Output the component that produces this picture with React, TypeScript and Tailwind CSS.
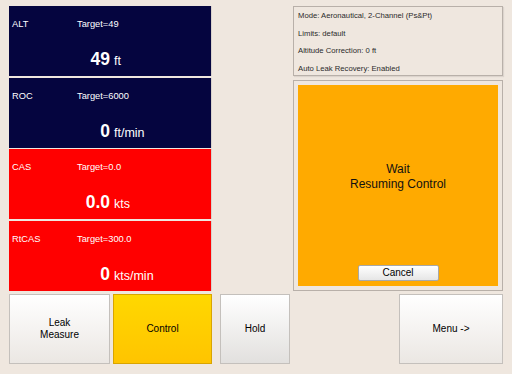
import React from "react";

const font = { fontFamily: '"Liberation Sans", Arial, sans-serif' };

type Reading = {
  label: string;
  target: string;
  value: string;
  unit: string;
  bg: string;
};

const readings: Reading[] = [
  { label: "ALT", target: "Target=49", value: "49", unit: "ft", bg: "bg-[#05053f]" },
  { label: "ROC", target: "Target=6000", value: "0", unit: "ft/min", bg: "bg-[#05053f]" },
  { label: "CAS", target: "Target=0.0", value: "0.0", unit: "kts", bg: "bg-[#ff0000]" },
  { label: "RtCAS", target: "Target=300.0", value: "0", unit: "kts/min", bg: "bg-[#ff0000]" },
];

const ReadingPanel = ({ r }: { r: Reading }) => (
  <div className={`${r.bg} h-[70px] text-white border-r border-[#d8d2cc] flex flex-col`}>
    <div className="flex h-[37px] items-center text-[9.3px] leading-none">
      <span className="pl-[3px] w-[68px]">{r.label}</span>
      <span>{r.target}</span>
    </div>
    <div className="flex items-baseline mt-[8px]">
      <span className="w-[101px] text-right text-[17.5px] font-bold leading-none">{r.value}</span>
      <span className="ml-[4px] text-[12.5px] leading-none">{r.unit}</span>
    </div>
  </div>
);

const App = () => {
  return (
    <div style={font} className="w-[512px] h-[374px] bg-[#efe7df] flex flex-col overflow-hidden">
      <div className="flex pt-[6px]">
        <div className="ml-[9px] w-[203px] flex flex-col gap-[1.7px]">
          {readings.map((r) => (
            <ReadingPanel key={r.label} r={r} />
          ))}
        </div>
        <div className="ml-[81px] w-[210px] flex flex-col">
          <div className="h-[70px] border border-[#b8b0a9] shadow-[1px_1px_1px_rgba(0,0,0,0.08)] pl-[4px] text-[7.7px] leading-[17.5px] text-[#2a2a2a]">
            <div>Mode: Aeronautical, 2-Channel (Ps&amp;Pt)</div>
            <div>Limits: default</div>
            <div>Altitude Correction: 0 ft</div>
            <div>Auto Leak Recovery: Enabled</div>
          </div>
          <div className="mt-[4px] h-[211px] border border-[#b8b0a9] p-[4px]">
            <div className="h-full bg-[#ffaa00] flex flex-col items-center">
              <div className="mt-[77px] text-center text-[12px] leading-[15px] text-[#111]">
                <div>Wait</div>
                <div>Resuming Control</div>
              </div>
              <button className="mt-auto mb-[5px] w-[81px] h-[16px] rounded-[2px] border border-[#a8a8a8] bg-gradient-to-b from-white to-[#e6e6e6] text-[10px] leading-none text-black">
                Cancel
              </button>
            </div>
          </div>
        </div>
      </div>
      <div className="flex mt-[3px] h-[70px] text-[10px] leading-[12px] text-black">
        <button className="ml-[9px] w-[101px] border border-[#c4c0bc] bg-gradient-to-b from-white to-[#ebe7e3] flex flex-col items-center justify-center">
          <span>Leak</span>
          <span>Measure</span>
        </button>
        <button className="ml-[3px] w-[99px] border border-[#d9a400] bg-gradient-to-b from-[#ffd800] to-[#ffc400]">
          Control
        </button>
        <button className="ml-[8px] w-[70px] border border-[#c4c0bc] bg-gradient-to-b from-white to-[#e2e0de]">
          Hold
        </button>
        <button className="ml-[109px] w-[104px] border border-[#c4c0bc] bg-gradient-to-b from-white to-[#ebe7e3]">
          Menu -&gt;
        </button>
      </div>
    </div>
  );
};

export default App;
